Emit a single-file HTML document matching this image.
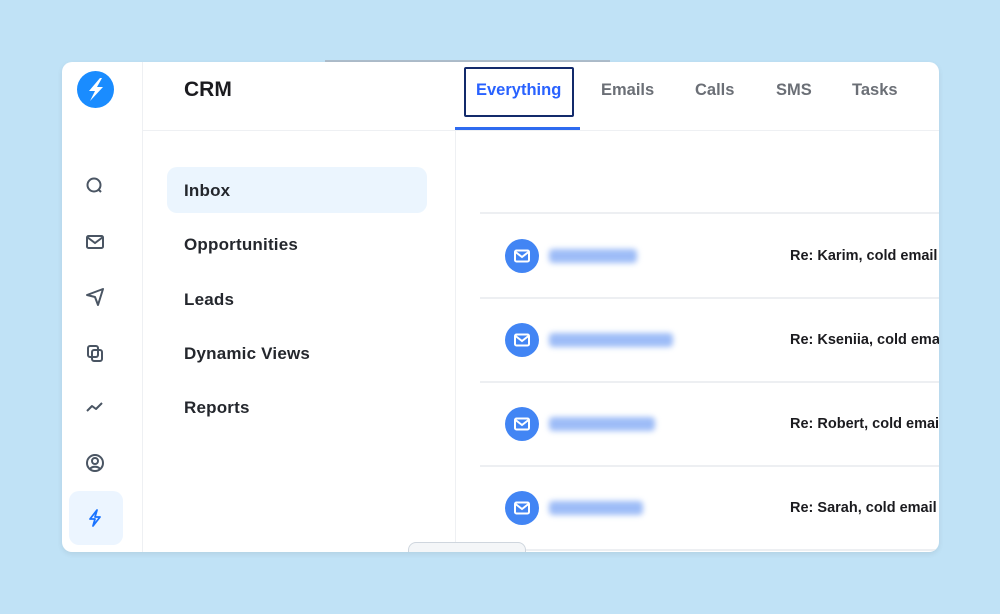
<!DOCTYPE html>
<html><head><style>
*{box-sizing:border-box;margin:0;padding:0}
body{width:1000px;height:614px;background:#c0e2f6;font-family:"Liberation Sans",sans-serif;position:relative;overflow:hidden}
.card{position:absolute;left:62px;top:62px;width:877px;height:490px;background:#fff;border-radius:10px;overflow:hidden;box-shadow:0 2px 6px rgba(0,0,0,.08)}
.side{position:absolute;left:0;top:0;width:81px;height:490px;border-right:1px solid #eef0f3}
.ic{position:absolute;left:22px;width:22px;height:22px}
.hdr{position:absolute;left:81px;top:0;right:0;height:69px;border-bottom:1px solid #eef0f3}
.crm{position:absolute;left:122px;top:16px;font-size:21px;font-weight:bold;color:#1b1b1f}
.tab{position:absolute;top:19px;font-size:16.5px;font-weight:bold;color:#6b6f76}
.nav{position:absolute;left:122px;font-size:17px;font-weight:bold;color:#24272d;letter-spacing:.2px}
.vline{position:absolute;left:393px;top:69px;width:1px;height:421px;background:#eef0f3}
.hl{position:absolute;left:418px;right:0;height:2px;background:#edeff2}
.circ{position:absolute;left:443px;width:34px;height:34px}
.blur{position:absolute;left:487px;height:14px;background:#9dbcf7;filter:blur(3px);border-radius:4px}
.re{position:absolute;left:728px;font-size:14.5px;font-weight:bold;color:#1b1b1f;white-space:nowrap}
</style></head><body>
<div style="position:absolute;left:325px;top:60px;width:285px;height:2px;background:#aebdcc"></div>
<div class="card">
 <div class="side">
  <svg style="position:absolute;left:15px;top:9px" width="37" height="37" viewBox="0 0 37 37"><circle cx="18.5" cy="18.5" r="18.5" fill="#1a8cff"/><path d="M23 7 L12 20 H18 L13 30 L26 16 H20 L25 7 Z" fill="#fff"/></svg>
  <svg class="ic" style="top:113px" viewBox="0 0 22 22" fill="none" stroke="#4a5563" stroke-width="2"><circle cx="10" cy="10" r="6.5"/><path d="M15 15l2 2"/></svg>
  <svg class="ic" style="top:169px" viewBox="0 0 22 22" fill="none" stroke="#4a5563" stroke-width="2"><rect x="3" y="5" width="16" height="12" rx="1.5"/><path d="M3 6l8 6 8-6"/></svg>
  <svg class="ic" style="top:224px" viewBox="0 0 22 22" fill="none" stroke="#4a5563" stroke-width="2" stroke-linejoin="round"><path d="M3 9L19 3 14 19 11 11Z"/></svg>
  <svg class="ic" style="top:280px" viewBox="0 0 22 22" fill="none" stroke="#4a5563" stroke-width="2"><rect x="4" y="4" width="10" height="11" rx="2"/><rect x="8" y="8" width="10" height="11" rx="2"/></svg>
  <svg class="ic" style="top:334px" viewBox="0 0 22 22" fill="none" stroke="#4a5563" stroke-width="2" stroke-linejoin="round"><path d="M3 15l5-5 4 3 6-6"/></svg>
  <svg class="ic" style="top:390px" viewBox="0 0 22 22" fill="none" stroke="#4a5563" stroke-width="2"><circle cx="11" cy="11" r="8"/><circle cx="11" cy="9" r="3"/><path d="M6 17c2-3 8-3 10 0"/></svg>
  <div style="position:absolute;left:7px;top:429px;width:54px;height:54px;border-radius:10px;background:#ecf5ff"></div>
  <svg class="ic" style="top:445px" viewBox="0 0 22 22" fill="none" stroke="#1a73ff" stroke-width="1.8" stroke-linejoin="round"><path d="M13 3L6 12h5l-2 7 7-9h-5z"/></svg>
 </div>
 <div class="hdr"></div>
 <div class="crm">CRM</div>
 <div style="position:absolute;left:402px;top:5px;width:110px;height:50px;border:2px solid #132a6b;border-radius:2px"></div>
 <div class="tab" style="left:414px;color:#2962ff">Everything</div>
 <div class="tab" style="left:539px">Emails</div>
 <div class="tab" style="left:633px">Calls</div>
 <div class="tab" style="left:714px">SMS</div>
 <div class="tab" style="left:790px">Tasks</div>
 <div style="position:absolute;left:393px;top:65px;width:125px;height:3px;background:#2f6bf0"></div>
 <div style="position:absolute;left:105px;top:105px;width:260px;height:46px;border-radius:10px;background:#ebf5fe"></div>
 <div class="nav" style="top:119px">Inbox</div>
 <div class="nav" style="top:173px">Opportunities</div>
 <div class="nav" style="top:228px">Leads</div>
 <div class="nav" style="top:282px">Dynamic Views</div>
 <div class="nav" style="top:336px">Reports</div>
 <div class="vline"></div>
 <div class="hl" style="top:150px"></div>
 <div class="hl" style="top:235px"></div>
 <div class="hl" style="top:319px"></div>
 <div class="hl" style="top:403px"></div>
 <div class="hl" style="top:487px"></div>
 <svg class="circ" style="top:177px" viewBox="0 0 34 34"><circle cx="17" cy="17" r="17" fill="#4285f4"/><rect x="10" y="11.5" width="14" height="11" rx="1.5" fill="none" stroke="#fff" stroke-width="2"/><path d="M10.5 13l6.5 5 6.5-5" fill="none" stroke="#fff" stroke-width="2"/></svg>
 <div class="blur" style="top:187px;width:88px"></div><div class="re" style="top:186px">Re: Karim, cold email</div>
 <svg class="circ" style="top:261px" viewBox="0 0 34 34"><circle cx="17" cy="17" r="17" fill="#4285f4"/><rect x="10" y="11.5" width="14" height="11" rx="1.5" fill="none" stroke="#fff" stroke-width="2"/><path d="M10.5 13l6.5 5 6.5-5" fill="none" stroke="#fff" stroke-width="2"/></svg>
 <div class="blur" style="top:271px;width:124px"></div><div class="re" style="top:270px">Re: Kseniia, cold email</div>
 <svg class="circ" style="top:345px" viewBox="0 0 34 34"><circle cx="17" cy="17" r="17" fill="#4285f4"/><rect x="10" y="11.5" width="14" height="11" rx="1.5" fill="none" stroke="#fff" stroke-width="2"/><path d="M10.5 13l6.5 5 6.5-5" fill="none" stroke="#fff" stroke-width="2"/></svg>
 <div class="blur" style="top:355px;width:106px"></div><div class="re" style="top:354px">Re: Robert, cold email</div>
 <svg class="circ" style="top:429px" viewBox="0 0 34 34"><circle cx="17" cy="17" r="17" fill="#4285f4"/><rect x="10" y="11.5" width="14" height="11" rx="1.5" fill="none" stroke="#fff" stroke-width="2"/><path d="M10.5 13l6.5 5 6.5-5" fill="none" stroke="#fff" stroke-width="2"/></svg>
 <div class="blur" style="top:439px;width:94px"></div><div class="re" style="top:438px">Re: Sarah, cold email</div>
 <div style="position:absolute;left:346px;top:480px;width:118px;height:20px;border:1px solid #cfd6de;border-radius:8px;background:#f4f6f8"></div>
</div>
</body></html>
